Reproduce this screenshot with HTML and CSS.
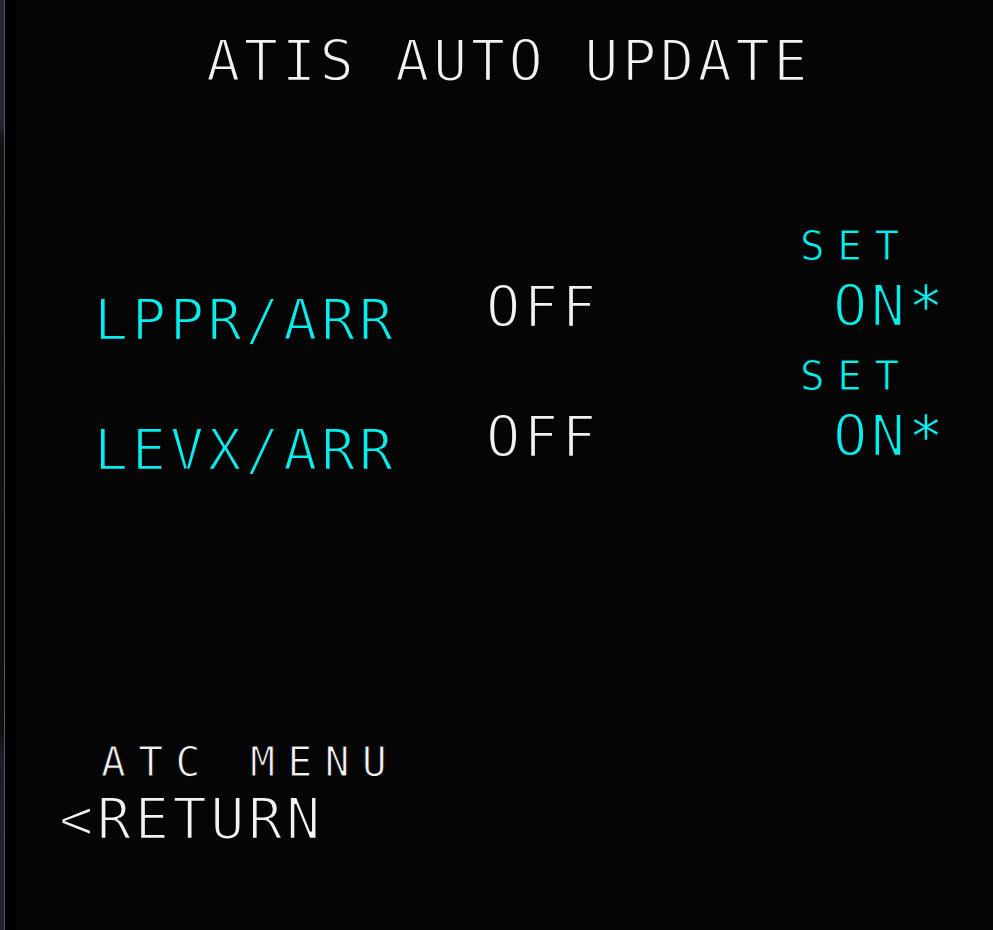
FILE: index.html
```html
<!DOCTYPE html>
<html lang="en">
<head>
  <meta charset="UTF-8"/>
  <meta name="viewport" content="width=device-width, initial-scale=1.0"/>
  <title>MCDU - ATIS Auto Update</title>
  <link rel="stylesheet" href="styles.css">
</head>
<body>
  <div class="bezel"></div>

  <main class="screen">
    <div class="title big white">ATIS AUTO UPDATE</div>

    <div class="entries">
      <div class="entry">
        <div class="label big cyan">LPPR/ARR</div>
        <div class="status big white">OFF</div>
        <div class="action">
          <div class="small cyan">SET</div>
          <div class="toggle big cyan">ON<span class="star">*</span></div>
        </div>
      </div>

      <div class="entry">
        <div class="label big cyan">LEVX/ARR</div>
        <div class="status big white">OFF</div>
        <div class="action">
          <div class="small cyan">SET</div>
          <div class="toggle big cyan">ON<span class="star">*</span></div>
        </div>
      </div>
    </div>

    <div class="footer">
      <div class="menu small white">ATC MENU</div>
      <div class="return big white">&lt;RETURN</div>
    </div>
  </main>
</body>
</html>
```

FILE: styles.css
```css
body {
  margin: 0; min-height: 100vh; overflow: hidden;
  display: flex; background-color: #050505;
  font-family: "DejaVu Sans Mono", monospace;
}
/* strip of the panel frame at the left edge */
.bezel {
  width: 4px; flex-shrink: 0;
  border-right: 1px solid #53575d;
  background: linear-gradient(to bottom,
    #242a35 0, #222731 125px, #111317 140px,
    #0d0e11 730px, #1a1f2a 760px, #1e2533 100%);
}
.screen {
  flex: 1; border-left: 11px solid #000;
  padding-top: 33px;
  display: flex; flex-direction: column;
}

/* display fonts: large and small characters on the same pitch */
.big {
  font-size: 57px; line-height: 57px; letter-spacing: 3.5px;
  -webkit-text-stroke: 2px #050505; white-space: pre;
}
.small {
  font-size: 41px; line-height: 41px; letter-spacing: 12.6px;
  -webkit-text-stroke: 1px #050505; white-space: pre;
}
.white { color: #f2f2f2; }
.cyan { color: #05eeee; }

.title { padding-left: 190px; }

.entries { margin-top: 136px; display: flex; flex-direction: column; }
.entry {
  height: 130px; padding-left: 78px;
  display: flex; align-items: flex-start;
}
.label { width: 392px; margin-top: 66px; }
.status { width: 314px; margin-top: 52.5px; }
.action { display: flex; flex-direction: column; }
.toggle { margin-top: 11.3px; margin-left: 33px; }
.star { -webkit-text-stroke: 0.6px #050505; }

.footer { margin-top: 256px; display: flex; flex-direction: column; }
.menu { padding-left: 85px; }
.return { padding-left: 43px; margin-top: 8.3px; }
```
